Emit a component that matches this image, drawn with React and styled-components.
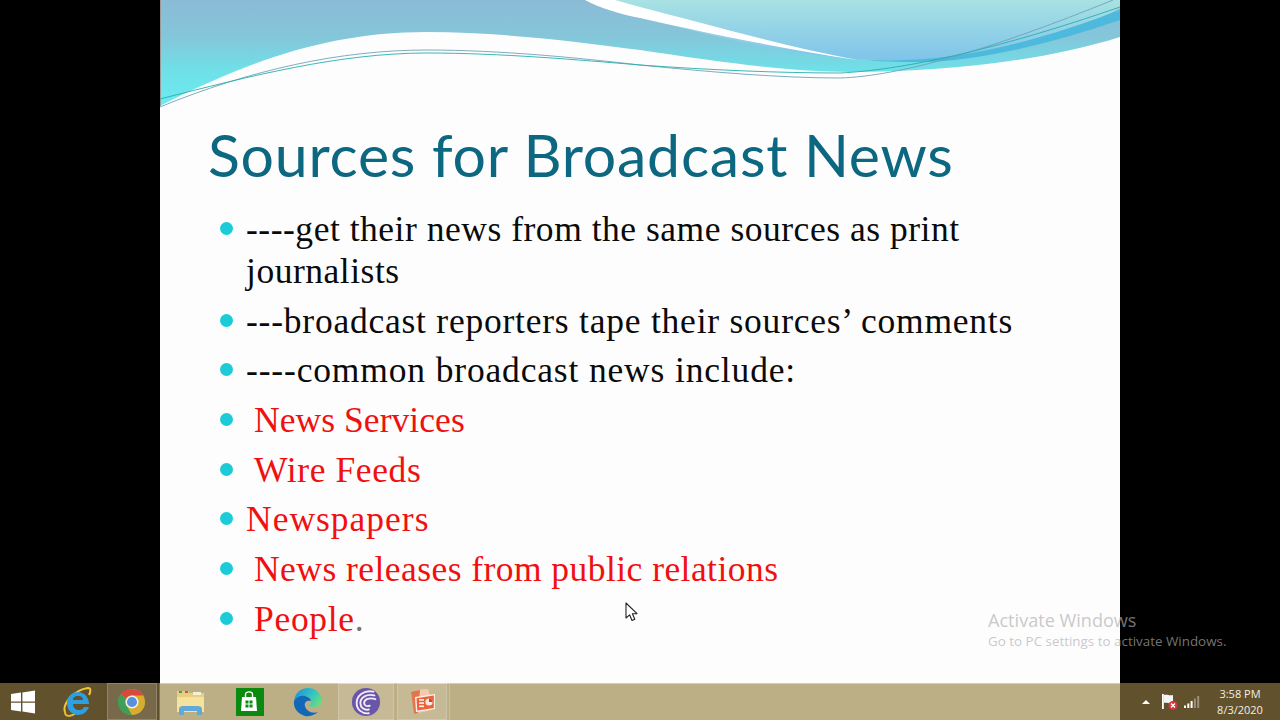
import React from "react";
import styled, { createGlobalStyle } from "styled-components";

const GlobalStyle = createGlobalStyle`
  html, body {
    margin: 0;
    padding: 0;
    background: #000;
  }
`;

const BULLETS = [
  { text: "----get their news from the same sources as print journalists", track: 0.52 },
  { text: "---broadcast reporters tape their sources’ comments", track: 0.77 },
  { text: "----common broadcast news include:", track: 0.84 },
  { text: "News Services", red: true, indent: true, track: 0.06 },
  { text: "Wire Feeds", red: true, indent: true, track: 0.62 },
  { text: "Newspapers", red: true, track: 1.0 },
  { text: "News releases from public relations", red: true, indent: true, track: 0.45 },
  { text: "People", red: true, indent: true, tail: ".", track: 0.7 },
];

const SlideBanner = () => (
  <BannerSvg viewBox="0 0 960 120">
    <defs>
      <linearGradient id="leftWave" x1="0" y1="0" x2="0" y2="1">
        <stop offset="0" stopColor="#8bbbd6" />
        <stop offset="0.35" stopColor="#84c6da" />
        <stop offset="0.66" stopColor="#6fe0e8" />
        <stop offset="1" stopColor="#6eeaf0" />
      </linearGradient>
      <linearGradient id="topWave" x1="0" y1="0" x2="0" y2="1">
        <stop offset="0" stopColor="#a8e2e3" />
        <stop offset="1" stopColor="#7fc3ea" />
      </linearGradient>
    </defs>
    <path
      d="M0 106 C90 60 170 32 267 32 C340 32 420 42 480 50 C560 62 630 72 690 72 C780 72 880 62 960 37 L960 0 L0 0 Z"
      fill="url(#leftWave)"
    />
    <path d="M425 0 C620 60 690 62 790 60 C860 50 920 30 960 8 L960 0 Z" fill="url(#topWave)" />
    <path d="M425 0 C440 8 460 14 480 18 C560 36 630 50 697 60 C620 45 550 25 480 7 C470 4 462 2 455 0 Z" fill="#fff" />
    <path d="M707 60 C800 64 880 40 960 10 L960 20 C890 44 830 58 770 62 C750 62 725 62 707 60 Z" fill="#4db9dd" />
    <path d="M0.5 0 V106" stroke="#999" strokeWidth="1" />
    <path
      d="M0 107 C90 70 180 50 267 50 C340 50 420 58 480 65 C550 72 620 78 680 78 C740 76 830 50 953 0"
      fill="none"
      stroke="#6fa3b8"
      strokeWidth="0.9"
    />
    <path
      d="M0 99 C90 76 180 53 267 53 C340 53 420 60 480 65 C550 70 620 73 680 73 C740 70 830 52 960 7"
      fill="none"
      stroke="#25b0ac"
      strokeWidth="0.9"
    />
  </BannerSvg>
);

const WindowsLogo = () => (
  <svg width="26" height="26" viewBox="0 0 26 26">
    <path d="M1 5 L11 3.6 V12.4 H1 Z M12.4 3.4 L25 1.6 V12.4 H12.4 Z M1 13.8 H11 V22.4 L1 21 Z M12.4 13.8 H25 V24.4 L12.4 22.6 Z" fill="#fff" />
  </svg>
);

const IeIcon = () => (
  <svg width="30" height="32" viewBox="0 0 30 32">
    <path d="M3 26 C0 18 12 4 26 2 C29 2 29 5 27 9" fill="none" stroke="#f0c53a" strokeWidth="2" />
    <path d="M3 26 C3 31 9 31 14 27" fill="none" stroke="#e8b92c" strokeWidth="2" />
    <path
      d="M5 17 C5 10 10 6 16 6 C22 6 27 11 27 18 H11 C11 22 14 24 17 24 C20 24 21 23 22 21 H27 C25 26 21 29 16 29 C10 29 5 24 5 17 Z M11 14 H21 C21 11 19 10 16 10 C13 10 11 11 11 14 Z"
      fill="#2e9fe0"
      fillRule="evenodd"
    />
  </svg>
);

const ChromeIcon = () => (
  <svg width="28" height="28" viewBox="0 0 30 30">
    <circle cx="15" cy="15" r="14" fill="#d8ac2e" />
    <path d="M15 1 A14 14 0 0 1 27.1 8 H15 A7 7 0 0 0 8.9 11.5 L3 6.3 A14 14 0 0 1 15 1 Z" fill="#d9483b" />
    <path d="M3 6.3 L8.9 11.5 C7.7 13.6 7.8 16.4 9 18.5 L14.9 29 A14 14 0 0 1 3 6.3 Z" fill="#3f9f56" />
    <circle cx="15" cy="15" r="7" fill="#f1f1f1" />
    <circle cx="15" cy="15" r="5.4" fill="#5a8fdc" />
  </svg>
);

const ExplorerIcon = () => (
  <svg width="30" height="28" viewBox="0 0 30 28">
    <path d="M1 3 H12 L14 5 H28 V20 H1 Z" fill="#e8cf80" />
    <rect x="3" y="3" width="3" height="2" fill="#4d9a56" />
    <rect x="9" y="3" width="3" height="2" fill="#c9584a" />
    <rect x="17" y="4" width="8" height="3" fill="#f5f0dc" />
    <path d="M1 9 H28 V24 H1 Z" fill="#f5e29c" />
    <path d="M3 27 V21 C3 19 5 18 7 18 H22 C24 18 26 19 26 21 V27 H21 V23 H8 V27 Z" fill="#62a8d8" />
  </svg>
);

const StoreIcon = () => (
  <svg width="28" height="28" viewBox="0 0 28 28">
    <rect width="28" height="28" fill="#0a8a0e" />
    <path d="M6 9 H20 L21 23 H5 Z" fill="#fff" />
    <path d="M9.5 9 V6.5 C9.5 3 16.5 3 16.5 6.5 V9" fill="none" stroke="#fff" strokeWidth="1.4" />
    <path d="M9.5 12.5 H12.5 V15.5 H9.5 Z M13.5 12.5 H16.5 V15.5 H13.5 Z M9.5 16.5 H12.5 V19.5 H9.5 Z M13.5 16.5 H16.5 V19.5 H13.5 Z" fill="#0a8a0e" />
  </svg>
);

const EdgeIcon = () => (
  <svg width="30" height="30" viewBox="0 0 30 30">
    <defs>
      <linearGradient id="edgeTop" x1="0" y1="0.2" x2="1" y2="0.7">
        <stop offset="0" stopColor="#1f8fd0" />
        <stop offset="0.55" stopColor="#2fc4c8" />
        <stop offset="1" stopColor="#6ade78" />
      </linearGradient>
    </defs>
    <path d="M1 14 C2 6 8 1 15 1 C23 1 29 7 29 14 C29 18 25 20 21 20 C18 20 16 19 16 18 C18 17 19 15 18 13 C16 9 11 8 7 10 C4 11 2 12 1 14 Z" fill="url(#edgeTop)" />
    <path d="M1 14 C3 10 8 8 12 9 C16 10 18 12 18 14 C14 13 11 15 12 19 C13 24 19 27 25 25 C20 29 15 30 12 29 C5 27 0 21 1 14 Z" fill="#1268b8" />
  </svg>
);

const TorrentIcon = () => (
  <svg width="30" height="30" viewBox="0 0 32 32">
    <circle cx="16" cy="16" r="15" fill="#6a55a8" />
    <g fill="none" stroke="#f0ecf8" strokeWidth="2" strokeLinecap="round">
      <path d="M24 5 C14 3 6 9 6 17 C6 24 12 29 19 28" />
      <path d="M25 9 C17 7 10 11 10 17 C10 22 14 25 19 24" />
      <path d="M26 13 C20 11 14 13 14 17 C14 20 17 21 20 20" />
    </g>
  </svg>
);

const PowerPointIcon = () => (
  <svg width="28" height="28" viewBox="0 0 28 28">
    <path d="M3 4 C8 2 14 1 20 1 L22 7 L24 22 L6 26 Z" fill="#f4c9ae" />
    <path d="M3 4 C6 3 9 2.4 12 2 L10 25 L6 26 Z" fill="#e0764e" />
    <path d="M7 9 L27 6 L27 21 L8 24 Z" fill="#fbeee6" />
    <path d="M8.5 10.2 L25.8 7.5 L25.8 20 L9.3 22.6 Z" fill="#e9623a" />
    <rect x="11" y="11" width="5" height="1.8" fill="#fbe6dc" />
    <rect x="11" y="14.2" width="5" height="1.8" fill="#fbe6dc" />
    <rect x="11" y="17.4" width="5" height="1.8" fill="#fbe6dc" />
    <circle cx="21" cy="14" r="3.6" fill="#fbe6dc" />
    <path d="M21 14 V10.4 A3.6 3.6 0 0 1 24.6 14 Z" fill="#c9482a" />
  </svg>
);

const FlagIcon = () => (
  <svg width="16" height="18" viewBox="0 0 16 18">
    <rect x="0" y="1" width="1.8" height="15" fill="#fff" />
    <path d="M1.8 2 C5 0.8 7 3 11 2 V10 C7 11 5 9 1.8 10 Z" fill="#f4f4f4" />
    <circle cx="11" cy="12.5" r="4.5" fill="#d8343a" />
    <path d="M9 10.5 L13 14.5 M13 10.5 L9 14.5" stroke="#fff" strokeWidth="1.4" />
  </svg>
);

const SignalIcon = () => (
  <svg width="16" height="12" viewBox="0 0 16 12">
    <rect x="0" y="9.5" width="2" height="2.5" fill="#fff" />
    <rect x="3.3" y="7.5" width="2" height="4.5" fill="#fff" />
    <rect x="6.6" y="5" width="2" height="7" fill="#fff" />
    <rect x="9.9" y="2.5" width="2" height="9.5" fill="#9b9079" />
    <rect x="13.2" y="0" width="2" height="12" fill="#9b9079" />
  </svg>
);

const CursorIcon = () => (
  <svg width="14" height="20" viewBox="0 0 14 20">
    <path d="M1 1 V16 L4.6 12.8 L7 18.5 L9.8 17.3 L7.4 11.8 L12 11.6 Z" fill="#fff" stroke="#222" strokeWidth="1.1" strokeLinejoin="round" />
  </svg>
);

const App = () => (
  <Screen>
    <GlobalStyle />
    <Stage>
      <Slide>
        <SlideBanner />
        <Title>Sources for Broadcast News</Title>
        <BulletList>
          {BULLETS.map((item) => (
            <Bullet key={item.text} $red={item.red} $indent={item.indent} $track={item.track}>
              <span>
                {item.text}
                {item.tail && <Tail>{item.tail}</Tail>}
              </span>
            </Bullet>
          ))}
        </BulletList>
      </Slide>
      <Pointer>
        <CursorIcon />
      </Pointer>
      <Watermark>
        <WatermarkTitle>Activate Windows</WatermarkTitle>
        <WatermarkText>Go to PC settings to activate Windows.</WatermarkText>
      </Watermark>
    </Stage>
    <Taskbar>
      <TaskGroup>
        <StartButton>
          <WindowsLogo />
        </StartButton>
        <TaskButton $width={61}>
          <IeIcon />
        </TaskButton>
        <TaskButton $width={50} $active>
          <ChromeIcon />
        </TaskButton>
        <Spacer />
        <TaskButton $width={61}>
          <ExplorerIcon />
        </TaskButton>
        <TaskButton $width={57}>
          <StoreIcon />
        </TaskButton>
        <TaskButton $width={60}>
          <EdgeIcon />
        </TaskButton>
        <TaskButton $width={56} $active>
          <TorrentIcon />
        </TaskButton>
        <TaskButton $width={50} $gap={3} $active>
          <PowerPointIcon />
        </TaskButton>
        <Spacer />
      </TaskGroup>
      <Tray>
        <TrayArrow />
        <FlagIcon />
        <SignalIcon />
        <Clock>
          <span>3:58 PM</span>
          <span>8/3/2020</span>
        </Clock>
      </Tray>
    </Taskbar>
  </Screen>
);

const Screen = styled.div`
  width: 1280px;
  height: 720px;
  display: flex;
  flex-direction: column;
  overflow: hidden;
  background: #000;
`;

const Stage = styled.div`
  position: relative;
  height: 683px;
  display: flex;
  justify-content: center;
`;

const Slide = styled.div`
  width: 960px;
  height: 683px;
  background: #fdfdfd;
  display: flex;
  flex-direction: column;
`;

const BannerSvg = styled.svg`
  display: block;
  width: 960px;
  height: 120px;
  flex: none;
`;

const Title = styled.h1`
  margin: 0;
  padding-left: 48px;
  height: 70px;
  line-height: 70px;
  font-family: "Lato", sans-serif;
  font-size: 59px;
  font-weight: 400;
  letter-spacing: 0.76px;
  color: #0c6780;
  white-space: nowrap;
`;

const BulletList = styled.ul`
  list-style: none;
  margin: 18px 0 0;
  padding: 0 90px 0 86px;
  display: flex;
  flex-direction: column;
  gap: 7.7px;
`;

const Bullet = styled.li`
  position: relative;
  font-family: "Liberation Serif", serif;
  font-size: 35.5px;
  line-height: 42px;
  letter-spacing: ${(p) => p.$track}px;
  color: ${(p) => (p.$red ? "#f01010" : "#0a0a0a")};
  padding-left: ${(p) => (p.$indent ? "8px" : "0")};

  &::before {
    content: "";
    position: absolute;
    left: -26px;
    top: 14px;
    width: 13px;
    height: 13px;
    border-radius: 50%;
    background: #1ccbd8;
  }
`;

const Tail = styled.span`
  color: #777;
`;

const Pointer = styled.div`
  position: absolute;
  left: 625px;
  top: 602px;
  line-height: 0;
`;

const Watermark = styled.div`
  position: absolute;
  left: 988px;
  top: 610px;
  font-family: "Open Sans", sans-serif;
  color: rgba(175, 175, 175, 0.68);
  white-space: nowrap;
`;

const WatermarkTitle = styled.div`
  font-size: 18.1px;
  line-height: 21px;
`;

const WatermarkText = styled.div`
  font-size: 13.4px;
  line-height: 21px;
`;

const Taskbar = styled.div`
  height: 37px;
  display: flex;
  justify-content: space-between;
  background:
    linear-gradient(
        to right,
        #62512d 160px,
        #d8cdae 160px,
        #d8cdae 1120px,
        #62512d 1120px
      )
      top / 100% 1px no-repeat,
    linear-gradient(
      to right,
      #62512d 160px,
      #bcae85 160px,
      #bcae85 1120px,
      #62512d 1120px
    );
`;

const TaskGroup = styled.div`
  display: flex;
  align-items: stretch;
`;

const StartButton = styled.div`
  width: 46px;
  display: flex;
  align-items: center;
  justify-content: center;
`;

const TaskButton = styled.div`
  width: ${(p) => p.$width}px;
  margin-left: ${(p) => p.$gap || 0}px;
  box-sizing: border-box;
  display: flex;
  align-items: center;
  justify-content: center;
  border: 1px solid ${(p) => (p.$active ? "rgba(255, 255, 255, 0.18)" : "transparent")};
  background: ${(p) => (p.$active ? "rgba(255, 255, 255, 0.14)" : "transparent")};
`;

const Spacer = styled.div`
  width: 3px;
  box-sizing: border-box;
  border-right: 1px solid rgba(255, 255, 255, 0.2);
`;

const Tray = styled.div`
  display: flex;
  align-items: center;
  gap: 6px;
  padding-right: 9px;
  color: #f2eee2;
`;

const TrayArrow = styled.div`
  width: 0;
  height: 0;
  margin-right: 6px;
  border-left: 4px solid transparent;
  border-right: 4px solid transparent;
  border-bottom: 4px solid #fff;
`;

const Clock = styled.div`
  display: flex;
  flex-direction: column;
  align-items: center;
  width: 62px;
  margin-left: 3px;
  font-family: "Open Sans", sans-serif;
  font-size: 11px;
  line-height: 16px;
`;

export default App;
